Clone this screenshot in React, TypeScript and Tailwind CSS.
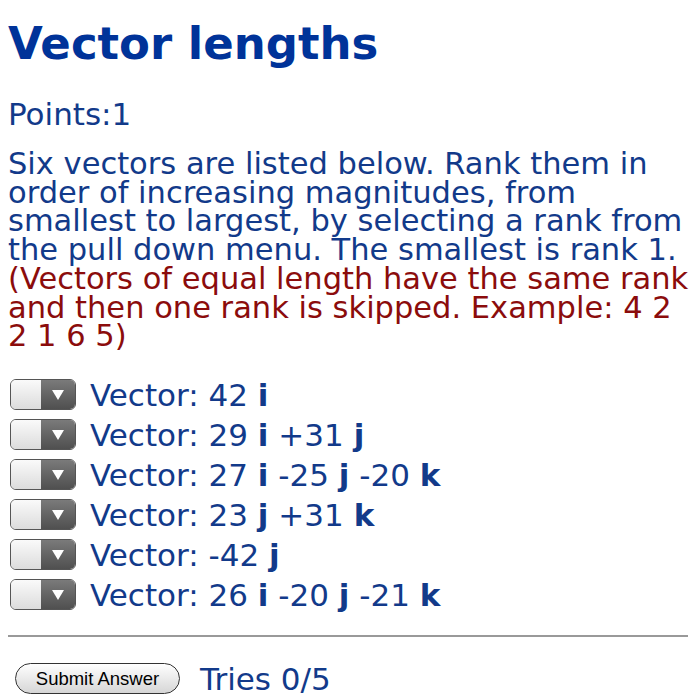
import React from "react";

function Sel() {
  return (
    <div className="flex h-[31px] w-[66px] shrink-0 overflow-hidden rounded-[6px] border border-[#555]">
      <div className="w-[30px] bg-gradient-to-b from-[#fafafa] to-[#dcdcdc]" />
      <div className="flex flex-1 items-center justify-center bg-gradient-to-b from-[#7a7a7a] to-[#505050]">
        <svg width="12" height="10" viewBox="0 0 12 10">
          <path d="M0 0 L12 0 L6 10 Z" fill="#fff" />
        </svg>
      </div>
    </div>
  );
}

const rows: React.ReactNode[] = [
  <>42 <b>i</b></>,
  <>29 <b>i</b> +31 <b>j</b></>,
  <>27 <b>i</b> -25 <b>j</b> -20 <b>k</b></>,
  <>23 <b>j</b> +31 <b>k</b></>,
  <>-42 <b>j</b></>,
  <>26 <b>i</b> -20 <b>j</b> -21 <b>k</b></>,
];

export default function App() {
  return (
    <div className="w-[696px] h-[700px] overflow-hidden bg-white px-[8px]" style={{ fontFamily: '"DejaVu Sans", Verdana, sans-serif' }}>
      <h1 className="pt-[18px] text-[45px] font-bold leading-[52px] text-[#003399]">Vector lengths</h1>
      <div className="mt-[28px] text-[31px] leading-[32px] text-[#123a8a]">Points:1</div>
      <p className="mt-[20px] text-[30.5px] leading-[28.7px] text-[#123a8a] whitespace-nowrap">
        Six vectors are listed below. Rank them in<br />
        order of increasing magnitudes, from<br />
        smallest to largest, by selecting a rank from<br />
        the pull down menu. The smallest is rank 1.<br />
        <span className="text-[#8b0c0c]">(Vectors of equal length have the same rank<br />
        and then one rank is skipped. Example: 4 2<br />
        2 1 6 5)</span>
      </p>
      <div className="mt-[24px] flex flex-col">
        {rows.map((r, i) => (
          <div key={i} className="flex h-[40px] items-center">
            <div className="ml-[2px]"><Sel /></div>
            <span className="ml-[14px] text-[31px] leading-[32px] text-[#123a8a] whitespace-nowrap">Vector: {r}</span>
          </div>
        ))}
      </div>
      <hr className="mt-[20px] border-t-2 border-[#999]" />
      <div className="mt-[26px] flex items-center">
        <button className="ml-[7px] h-[31px] w-[165px] rounded-full border border-[#333] bg-gradient-to-b from-[#ffffff] to-[#d6d6d6] text-[18.5px] text-black" style={{ fontFamily: '"Liberation Sans", Arial, sans-serif' }}>
          Submit Answer
        </button>
        <span className="ml-[20px] text-[31px] leading-[32px] text-[#123a8a]">Tries 0/5</span>
      </div>
    </div>
  );
}
